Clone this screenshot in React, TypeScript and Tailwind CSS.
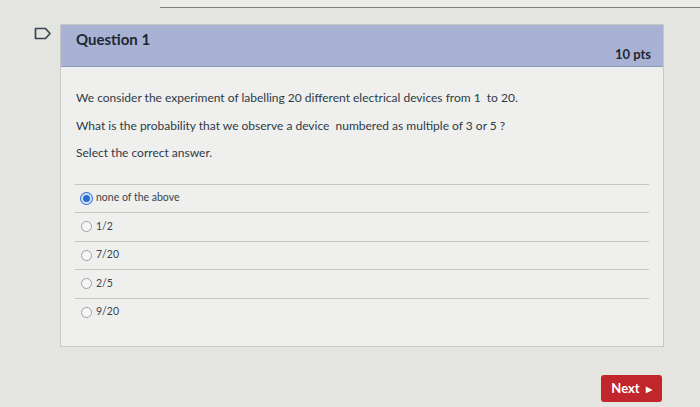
import React from "react";

const answers = ["none of the above", "1/2", "7/20", "2/5", "9/20"];

export default function App() {
  return (
    <div
      className="w-[700px] h-[407px] bg-[#e4e4e1] overflow-hidden flex flex-col"
      style={{ fontFamily: "Lato, 'Noto Sans', sans-serif" }}
    >
      <div className="h-[8px] ml-[160px] border-b border-[#7f7f7f] bg-[#ececea]" />
      <div className="flex mt-[16px]">
        <div className="w-[60px] flex justify-end pr-[8px] pt-[3px]">
          <svg width="18" height="13" viewBox="0 0 18 13">
            <path
              d="M1.5 1.5 H11.5 L16 6.5 L11.5 11.5 H1.5 Z"
              fill="none"
              stroke="#3b4650"
              strokeWidth="1.7"
              strokeLinejoin="round"
            />
          </svg>
        </div>
        <div className="w-[604px] border border-[#c8c8c6] bg-[#efefed] flex flex-col h-[323px]">
          <div className="h-[42px] bg-[#a9b2d5] border-b border-[#8f98b8] flex justify-between pl-[15px] pr-[12px] text-[#1e2833]">
            <div className="font-bold text-[15px] pt-[3px]">Question 1</div>
            <div className="font-bold text-[13px] self-end pb-[2px]">10 pts</div>
          </div>
          <div className="pl-[15px] pr-[15px] pt-[22px] text-[#2d3b45] text-[12px]">
            <p className="h-[27.5px]">We consider the experiment of labelling 20 different electrical devices from 1&nbsp; to 20.</p>
            <p className="h-[27.5px]">What is the probability that we observe a device&nbsp; numbered as multiple of 3 or 5 ?</p>
            <p className="h-[27.5px]">Select the correct answer.</p>
          </div>
          <div className="ml-[14px] mr-[14px] mt-[12px] flex flex-col">
            {answers.map((a, i) => (
              <div
                key={a}
                className="h-[28.5px] border-t border-[#c6c6c4] flex items-center pl-[6px] gap-[4px] text-[10.5px] text-[#3a444c]"
              >
                {i === 0 ? (
                  <span className="w-[11px] h-[11px] rounded-full bg-[#2b6fd6] border-[2px] border-[#cfe0f7] ring-1 ring-[#2b6fd6]" />
                ) : (
                  <span className="w-[11px] h-[11px] rounded-full border border-[#9aa0a6] bg-[#f7f7f5]" />
                )}
                <span>{a}</span>
              </div>
            ))}
          </div>
        </div>
      </div>
      <div className="flex justify-end pr-[38px] mt-[28px]">
        <div className="w-[61px] h-[27px] rounded-[3px] bg-[#c1262c] text-white font-bold text-[13px] flex items-center justify-center gap-[6px]">
          <span>Next</span>
          <span className="text-[8px]">▶</span>
        </div>
      </div>
    </div>
  );
}
